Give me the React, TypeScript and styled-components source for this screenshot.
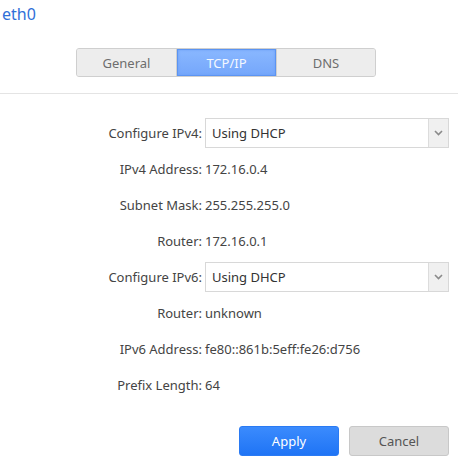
import React from 'react'
import styled, { createGlobalStyle } from 'styled-components'

const Global = createGlobalStyle`
  html, body { margin: 0; padding: 0; background: #fff; }
  body { font-family: "Noto Sans", "Open Sans", sans-serif; }
`

const Page = styled.div`
  width: 458px;
  height: 465px;
  display: flex;
  flex-direction: column;
`

const Title = styled.div`
  color: #2f6fd8;
  font-size: 16px;
  line-height: 20px;
  padding: 4px 0 0 2px;
  height: 20px;
`

const TabBar = styled.div`
  display: flex;
  justify-content: center;
  margin: 24px 0 0 -6px;
  padding-bottom: 16px;
  border-bottom: 1px solid #e4e4e4;
`

const TabGroup = styled.div`
  display: flex;
  border: 1px solid #cfcfcf;
  border-radius: 3px;
  overflow: hidden;
  background: #ededed;
`

const Tab = styled.div<{ $active?: boolean }>`
  box-sizing: border-box;
  width: ${p => (p.$active ? '100px' : '99px')};
  height: 27px;
  display: flex;
  align-items: center;
  justify-content: center;
  font-size: 13px;
  color: ${p => (p.$active ? '#f4f8ff' : '#6e6e6e')};
  background: ${p => (p.$active ? 'linear-gradient(#8ab8ff, #74a6fb)' : '#ededed')};
  box-shadow: ${p => (p.$active ? 'inset 0 0 0 1px #5b94f2, inset 0 0 3px 1px #6c9ff5' : 'none')};
  & + & {
    border-left: 1px solid #cfcfcf;
  }
`

const Form = styled.div`
  display: grid;
  grid-template-columns: 202px 244px;
  column-gap: 3px;
  padding-top: 21px;
`

const Label = styled.div`
  font-size: 13px;
  color: #444;
  height: 36px;
  display: flex;
  align-items: center;
  justify-content: flex-end;
`

const Value = styled.div`
  font-size: 13px;
  color: #444;
  height: 36px;
  display: flex;
  align-items: center;
`

const Select = styled.div`
  width: 244px;
  height: 30px;
  box-sizing: border-box;
  border: 1px solid #d8d8d8;
  display: flex;
  align-items: stretch;
  font-size: 13px;
  color: #333;
`

const SelectText = styled.div`
  flex: 1;
  display: flex;
  align-items: center;
  padding-left: 6px;
`

const Arrow = styled.div`
  width: 19px;
  background: #f0f0f0;
  border-left: 1px solid #dcdcdc;
  display: flex;
  align-items: center;
  justify-content: center;
`

const Footer = styled.div`
  display: flex;
  justify-content: flex-end;
  gap: 10px;
  padding: 23px 9px 0 0;
`

const Button = styled.button<{ $primary?: boolean }>`
  width: 100px;
  height: 30px;
  border-radius: 3px;
  font-family: inherit;
  font-size: 13px;
  cursor: pointer;
  color: ${p => (p.$primary ? '#ffffff' : '#555')};
  background: ${p => (p.$primary ? 'linear-gradient(#3b8bfd, #1f74f5)' : '#dcdcdc')};
  border: 1px solid ${p => (p.$primary ? '#2a7af3' : '#c8c8c8')};
`

const Chevron = () => (
  <svg width="9" height="6" viewBox="0 0 9 6">
    <path d="M1 1l3.5 3.5L8 1" fill="none" stroke="#8a8a8a" strokeWidth="1.6" />
  </svg>
)

const Dropdown = ({ value }: { value: string }) => (
  <Select>
    <SelectText>{value}</SelectText>
    <Arrow>
      <Chevron />
    </Arrow>
  </Select>
)

const rows: [string, React.ReactNode][] = [
  ['Configure IPv4:', <Dropdown value="Using DHCP" />],
  ['IPv4 Address:', '172.16.0.4'],
  ['Subnet Mask:', '255.255.255.0'],
  ['Router:', '172.16.0.1'],
  ['Configure IPv6:', <Dropdown value="Using DHCP" />],
  ['Router:', 'unknown'],
  ['IPv6 Address:', 'fe80::861b:5eff:fe26:d756'],
  ['Prefix Length:', '64'],
]

export default function App() {
  return (
    <Page>
      <Global />
      <Title>eth0</Title>
      <TabBar>
        <TabGroup>
          <Tab>General</Tab>
          <Tab $active>TCP/IP</Tab>
          <Tab>DNS</Tab>
        </TabGroup>
      </TabBar>
      <Form>
        {rows.map(([label, value], i) => (
          <React.Fragment key={i}>
            <Label>{label}</Label>
            <Value>{value}</Value>
          </React.Fragment>
        ))}
      </Form>
      <Footer>
        <Button $primary>Apply</Button>
        <Button>Cancel</Button>
      </Footer>
    </Page>
  )
}
